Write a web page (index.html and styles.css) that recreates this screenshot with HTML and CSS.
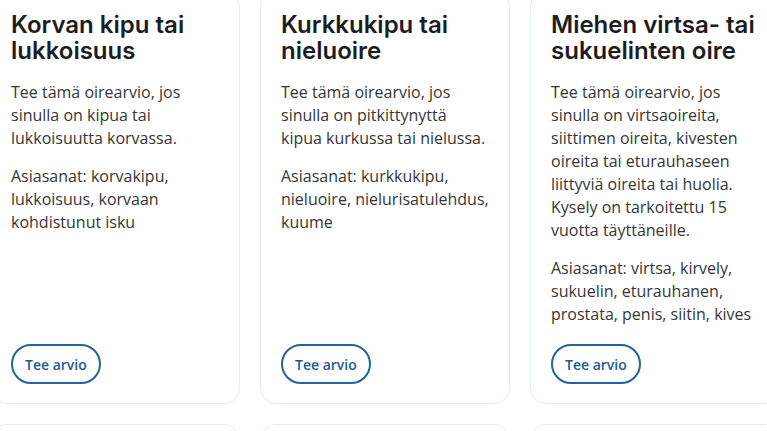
FILE: index.html
```html
<!DOCTYPE html>
<html lang="fi">
<head>
  <meta charset="UTF-8">
  <meta name="viewport" content="width=device-width, initial-scale=1.0">
  <title>Oirearviot</title>
  <link rel="stylesheet" href="styles.css">
</head>
<body>
  <div class="cards">
    <div class="card">
      <h2>Korvan kipu tai lukkoisuus</h2>
      <p>Tee tämä oirearvio, jos sinulla on kipua tai lukkoisuutta korvassa.</p>
      <p>Asiasanat: korvakipu, lukkoisuus, korvaan kohdistunut isku</p>
      <a class="btn" href="#">Tee arvio</a>
    </div>
    <div class="card">
      <h2>Kurkkukipu tai nieluoire</h2>
      <p>Tee tämä oirearvio, jos sinulla on pitkittynyttä kipua kurkussa tai nielussa.</p>
      <p>Asiasanat: kurkkukipu, nieluoire, nielurisatulehdus, kuume</p>
      <a class="btn" href="#">Tee arvio</a>
    </div>
    <div class="card">
      <h2>Miehen virtsa- tai sukuelinten oire</h2>
      <p>Tee tämä oirearvio, jos sinulla on virtsaoireita, siittimen oireita, kivesten oireita tai eturauhaseen liittyviä oireita tai huolia. Kysely on tarkoitettu 15 vuotta täyttäneille.</p>
      <p>Asiasanat: virtsa, kirvely, sukuelin, eturauhanen, prostata, penis, siitin, kives</p>
      <a class="btn" href="#">Tee arvio</a>
    </div>
    <div class="card"></div>
    <div class="card"></div>
    <div class="card"></div>
  </div>
</body>
</html>
```

FILE: styles.css
```css
body {
  margin: 0;
  background: #fff;
  font-family: 'Open Sans', 'Liberation Sans', sans-serif;
  color: #363636;
  overflow: hidden;
}
.cards {
  display: grid;
  grid-template-columns: repeat(3, 250px);
  column-gap: 20px;
  row-gap: 20px;
  margin-top: -9px;
  margin-left: -10px;
}
.card {
  display: flex;
  flex-direction: column;
  align-items: flex-start;
  height: 372px;
  padding: 20px 19px 19px 20px;
  border: 1px solid #e4ecf1;
  border-radius: 16px;
  background: #fff;
}
.card h2 {
  margin: 0 0 17px;
  font-family: 'Inter', 'Open Sans', sans-serif;
  font-weight: 600;
  font-size: 24px;
  line-height: 26px;
  color: #1d1d1f;
}
.card p {
  margin: 0 0 15px;
  font-size: 16px;
  line-height: 23px;
}
.btn {
  margin-top: auto;
  box-sizing: border-box;
  height: 40px;
  padding: 0 12px;
  display: inline-flex;
  align-items: center;
  border: 2px solid #2263a0;
  border-radius: 20px;
  color: #1c5a96;
  font-size: 14px;
  font-weight: 600;
  text-decoration: none;
}
```
